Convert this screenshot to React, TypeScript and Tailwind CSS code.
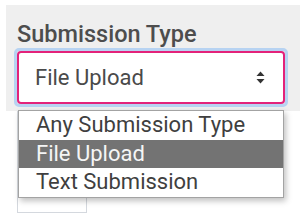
import React from 'react';

const options = ['Any Submission Type', 'File Upload', 'Text Submission'];

const SortIcon = () => (
  <svg width="9" height="13" viewBox="0 0 9 13" className="text-[#333]">
    <path d="M4.5 0.5 L8.5 5 H0.5 Z" fill="currentColor" />
    <path d="M4.5 12.5 L8.5 8 H0.5 Z" fill="currentColor" />
  </svg>
);

export default function App() {
  return (
    <div className="relative w-[300px] h-[222px] bg-white overflow-hidden" style={{ fontFamily: 'Roboto, "Liberation Sans", sans-serif' }}>
      <div className="ml-[6px] mt-[5px] h-[106px] bg-[#efefef] pl-[8px] pr-[12px] pt-[16px]">
        <div className="pl-[3px] text-[23.5px] leading-[27px] font-medium text-[#4d4d4d]">Submission Type</div>
        <div className="rounded-[5px] border-[3px] border-[#b7d3f2]">
          <div className="flex h-[53px] items-center justify-between rounded-[4px] border-2 border-[#e3227a] bg-white pl-[16px] pr-[18px]">
            <span className="text-[22px] text-[#4a4a4a]">File Upload</span>
            <SortIcon />
          </div>
        </div>
      </div>

      {/* box underneath the open list */}
      <div className="ml-[17px] h-[102px] w-[70px] border border-t-0 border-[#d4d8de]" />

      <ul className="absolute left-[18px] top-[110px] w-[266px] border border-[#a3a3a3] bg-white shadow-[2px_3px_6px_rgba(0,0,0,0.25)]">
        {options.map((opt) => (
          <li
            key={opt}
            className={
              opt === 'File Upload'
                ? 'h-[28.5px] pl-[17px] text-[22px] leading-[28px] bg-[#737373] text-[#f5f5f5]'
                : 'h-[28.5px] pl-[17px] text-[22px] leading-[28px] text-[#3f3f3f]'
            }
          >
            {opt}
          </li>
        ))}
      </ul>
    </div>
  );
}
